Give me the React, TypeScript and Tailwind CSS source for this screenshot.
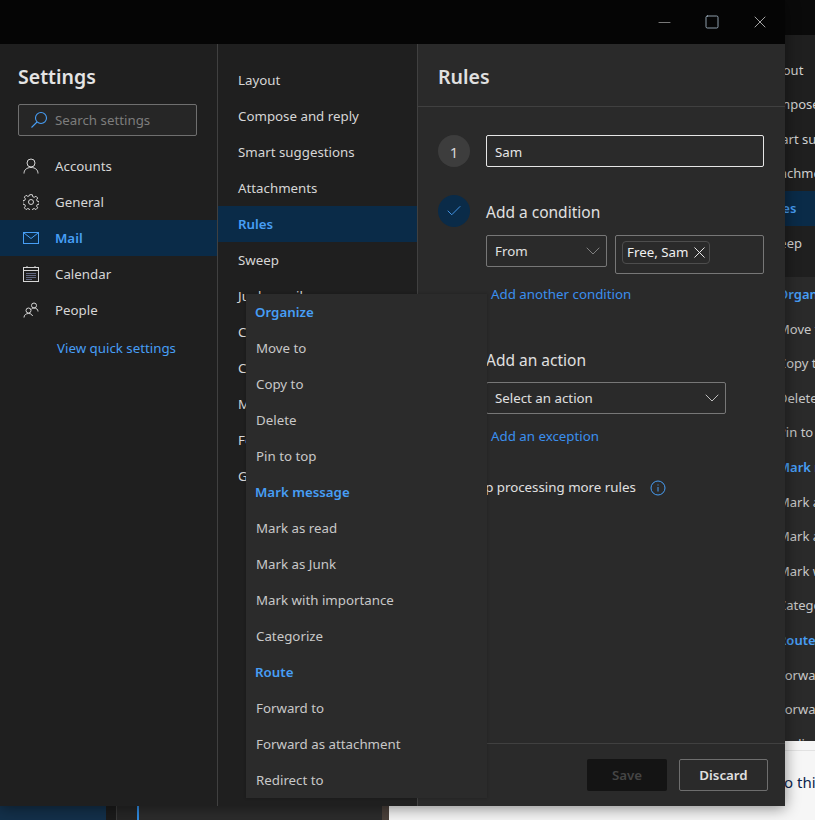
import type { ReactNode } from 'react';
import { Check, ChevronDown, Minus, Square, X } from 'lucide-react';

const MAIL_ITEMS = [
  'Layout',
  'Compose and reply',
  'Smart suggestions',
  'Attachments',
  'Rules',
  'Sweep',
  'Junk email',
  'Customize actions',
  'Categories',
  'Message handling',
  'Forwarding',
  'Groups',
];

const ACTION_MENU = [
  { label: 'Organize', header: true },
  { label: 'Move to' },
  { label: 'Copy to' },
  { label: 'Delete' },
  { label: 'Pin to top' },
  { label: 'Mark message', header: true },
  { label: 'Mark as read' },
  { label: 'Mark as Junk' },
  { label: 'Mark with importance' },
  { label: 'Categorize' },
  { label: 'Route', header: true },
  { label: 'Forward to' },
  { label: 'Forward as attachment' },
  { label: 'Redirect to' },
];

const FONT = "font-['Noto_Sans','Open_Sans',sans-serif]";

function Glyph({ children }: { children: ReactNode }) {
  return (
    <svg viewBox="0 0 16 16" className="w-4 h-4 shrink-0" fill="none" stroke="currentColor" strokeWidth="1">
      {children}
    </svg>
  );
}

function NavRow({ icon, label, active }: { icon: ReactNode; label: string; active?: boolean }) {
  return (
    <div
      className={
        active
          ? 'h-9 flex items-center gap-4 pl-[23px] bg-[#0a2b48] text-[#479ef5] font-semibold'
          : 'h-9 flex items-center gap-4 pl-[23px] text-[#d6d6d6]'
      }
    >
      {icon}
      <span className="pt-[2px]">{label}</span>
    </div>
  );
}

function BackWindow() {
  return (
    <>
      {/* other copy of the settings window, only its right edge shows */}
      <div className="absolute left-[700px] top-0 right-0 h-[35px] bg-[#0a0a0a]" />
      <div className={`absolute left-[700px] top-[35px] right-0 h-[706px] bg-[#1f1f1f] overflow-hidden text-[13px] whitespace-nowrap ${FONT}`}>
        <div className="pt-[18px]">
          {MAIL_ITEMS.slice(0, 6).map(item => (
            <div
              key={item}
              className={
                item === 'Rules'
                  ? 'h-[34.6px] flex items-center pl-[62px] bg-[#0a2b48] text-[#479ef5] font-semibold'
                  : 'h-[34.6px] flex items-center pl-[62px] text-[#d0d0d0]'
              }
            >
              {item}
            </div>
          ))}
        </div>
        <div className="mt-[16px] h-[480px] bg-[#2a2a2a]">
          {ACTION_MENU.map(item => (
            <div
              key={item.label}
              className={
                item.header
                  ? 'h-[34.6px] flex items-center pt-[2px] pl-[78px] text-[#479ef5] font-semibold'
                  : 'h-[34.6px] flex items-center pt-[2px] pl-[78px] text-[#c8c8c8]'
              }
            >
              {item.label}
            </div>
          ))}
        </div>
      </div>
      <div className={`absolute left-[700px] top-[741px] right-0 h-[79px] bg-[#f6f6f6] ${FONT}`}>
        <div className="mt-[9px] border-t border-[#e2e2e2] pt-[20px] pl-[84px] text-[15px] text-[#0b1f4d] whitespace-nowrap">
          o this
        </div>
      </div>
      <div className="absolute left-0 top-[790px] h-[30px] w-[700px] flex">
        <div className="w-[106px] bg-[#13304a]" />
        <div className="w-[11px] bg-[#1b1b1b] border-r border-[#3a3a3a]" />
        <div className="w-[20px] bg-[#262626]" />
        <div className="w-[2px] bg-[#2f8ae0]" />
        <div className="w-[243px] bg-[#2c2c2c]" />
        <div className="w-[7px] bg-[#4a403a]" />
        <div className="flex-1 bg-[#f4f4f4]" />
      </div>
    </>
  );
}

function SettingsColumn() {
  return (
    <div className="w-[218px] shrink-0 bg-[#1f1f1f] border-r border-[#404040]">
      <h1 className="pl-[18px] pt-[19px] h-[60px] text-[19.500px] leading-[28px] font-semibold text-[#e4e4e4]">Settings</h1>
      <div className="ml-[18px] w-[179px] h-8 flex items-center gap-[7px] pl-[11px] border border-[#6f6f6f] rounded-[2px] bg-[#262626] text-[#7d7d7d]">
        <svg viewBox="0 0 18 18" className="w-[18px] h-[18px] shrink-0 text-[#479ef5]" fill="none" stroke="currentColor" strokeWidth="1.1">
          <circle cx="11" cy="7" r="5.500" />
          <path d="M7 11 L1.500 16.500" />
        </svg>
        <span className="pt-[2px]">Search settings</span>
      </div>
      <div className="mt-3">
        <NavRow
          label="Accounts"
          icon={
            <Glyph>
              <circle cx="8" cy="5" r="4" />
              <path d="M1 15.500c0-3.500 2.500-6 7-6s7 2.500 7 6" />
            </Glyph>
          }
        />
        <NavRow
          label="General"
          icon={
            <Glyph>
              <circle cx="8" cy="8" r="2.500" />
              <path d="M6.700.7h2.600l.4 2 1.500.6 1.700-1.100 1.800 1.800-1.100 1.700.6 1.500 2 .4v2.600l-2 .4-.6 1.500 1.100 1.700-1.800 1.800-1.700-1.100-1.500.6-.4 2H6.700l-.4-2-1.500-.6-1.700 1.100-1.800-1.800 1.100-1.700-.6-1.500-2-.4V6.700l2-.4.6-1.500-1.100-1.700 1.800-1.800 1.700 1.100 1.500-.6z" />
            </Glyph>
          }
        />
        <NavRow
          active
          label="Mail"
          icon={
            <Glyph>
              <rect x="0.500" y="2.500" width="15" height="11" />
              <path d="M1 3l7 5.500L15 3" />
            </Glyph>
          }
        />
        <NavRow
          label="Calendar"
          icon={
            <Glyph>
              <rect x="0.500" y="1.500" width="15" height="14" />
              <path d="M1 4.500h14M4 0v2M12 0v2" />
              <path d="M3.500 7.500h9M3.500 9.500h9M3.500 11.500h9M3.500 13.500h6" strokeDasharray="1 1" stroke="#a8b4e8" />
            </Glyph>
          }
        />
        <NavRow
          label="People"
          icon={
            <Glyph>
              <circle cx="5.500" cy="8.500" r="2.500" />
              <circle cx="11" cy="3.500" r="2.500" />
              <path d="M1 15.500c0-2.500 2-4 4.500-4s3.500 1 4 2.500M8 7.500c.8-1 1.800-1.500 3-1.500 2.500 0 4 1.500 4 3.500" />
            </Glyph>
          }
        />
      </div>
      <div className="h-10 flex items-center pt-[2px] pl-[57px] text-[#479ef5] whitespace-nowrap">View quick settings</div>
    </div>
  );
}

function MailColumn() {
  return (
    <div className="w-[200px] shrink-0 bg-[#1f1f1f] border-r border-[#404040] pt-[18px]">
      {MAIL_ITEMS.map(item => (
        <div
          key={item}
          className={
            item === 'Rules'
              ? 'h-9 flex items-center pt-[2px] pl-5 bg-[#0a2b48] text-[#479ef5] font-semibold'
              : 'h-9 flex items-center pt-[2px] pl-5 text-[#d6d6d6]'
          }
        >
          {item}
        </div>
      ))}
    </div>
  );
}

function RulesColumn() {
  return (
    <div className="flex-1 min-w-0 flex flex-col bg-[#2a2a2a] text-[#e0e0e0]">
      <h2 className="h-[63px] shrink-0 pl-5 pt-[19px] text-[19.500px] leading-[28px] font-semibold border-b border-[#404040]">Rules</h2>

      <div className="flex-1 pl-5 pt-[28px]">
        <div className="flex gap-4">
          <div className="w-8 h-8 rounded-full bg-[#3d3d3d] flex items-center justify-center pt-[2px] text-[15px] text-[#d6d6d6]">1</div>
          <div className="w-[278px] h-8 flex items-center pt-[3px] px-2 border border-[#e6e6e6] rounded-[2px] text-[#e6e6e6]">Sam</div>
        </div>

        <div className="mt-7 flex gap-4 items-center">
          <div className="w-8 h-8 rounded-full bg-[#0a2b48] flex items-center justify-center text-[#479ef5]">
            <Check size={18} strokeWidth={1.2} />
          </div>
          <div className="text-[15.500px] text-[#e0e0e0] mt-[4px]">Add a condition</div>
        </div>

        <div className="ml-12 mt-2 flex gap-2 items-start">
          <div className="w-[121px] h-8 flex items-center justify-between pl-2 pr-[1px] border border-[#777] rounded-[2px]">
            <span className="pt-[2px]">From</span>
            <ChevronDown size={24} strokeWidth={0.9} className="text-[#8a8a8a]" />
          </div>
          <div className="w-[149px] h-[39px] pl-[6px] pt-[5px] border border-[#777] rounded-[2px]">
            <div className="w-[88px] h-[23px] flex items-center pl-1 gap-[2px] border border-[#4d4d4d] rounded-[4px] text-[#f0f0f0] whitespace-nowrap">
              <span className="pt-[1px]">Free, Sam</span>
              <X size={19} strokeWidth={1.2} className="shrink-0" />
            </div>
          </div>
        </div>
        <div className="ml-[53px] mt-[10px] h-5 flex items-center pt-[2px] text-[#3b8fee]">Add another condition</div>

        <div className="ml-12 mt-[44px] h-6 flex items-center pt-[2px] text-[15.500px]">Add an action</div>
        <div className="ml-12 mt-[10px] w-[240px] h-8 flex items-center justify-between pl-2 pr-[1px] border border-[#777] rounded-[2px]">
          <span className="pt-[2px]">Select an action</span>
          <ChevronDown size={24} strokeWidth={0.9} className="text-[#cfcfcf]" />
        </div>
        <div className="ml-[53px] mt-3 h-5 flex items-center pt-[2px] text-[#3b8fee]">Add an exception</div>

        <div className="ml-[27px] mt-[32px] h-5 flex items-center gap-[14px] whitespace-nowrap">
          <span>Stop processing more rules</span>
          <svg viewBox="0 0 16 16" className="w-4 h-4 text-[#479ef5]" fill="none" stroke="currentColor" strokeWidth="1">
            <circle cx="8" cy="8" r="7" />
            <path d="M8 7v4.500M8 4.500v1" />
          </svg>
        </div>
      </div>

      <div className="h-[63px] shrink-0 border-t border-[#404040] flex justify-end gap-3 pt-[15px] pr-[17px]">
        <div className="w-[80px] h-8 flex items-center justify-center pt-[2px] bg-[#141414] rounded-[2px] text-[#454545] font-semibold">Save</div>
        <div className="w-[89px] h-8 flex items-center justify-center pt-[2px] border border-[#6e6e6e] rounded-[2px] text-[#e0e0e0] font-semibold">Discard</div>
      </div>
    </div>
  );
}

function ActionMenu() {
  return (
    <div className="absolute left-[246px] top-[250px] w-[241px] bg-[#2b2b2b] shadow-[0_0_3px_rgba(0,0,0,0.25)] whitespace-nowrap">
      {ACTION_MENU.map(item => (
        <div
          key={item.label}
          className={
            item.header
              ? 'h-9 flex items-center pt-[2px] pl-[9px] text-[#479ef5] font-semibold'
              : 'h-9 flex items-center pt-[2px] pl-[10px] text-[#c8c8c8]'
          }
        >
          {item.label}
        </div>
      ))}
    </div>
  );
}

export default function App() {
  return (
    <div className={`relative w-[815px] h-[820px] overflow-hidden bg-[#1f1f1f] text-[13.300px] ${FONT}`}>
      <BackWindow />

      {/* front settings window */}
      <div className="absolute left-0 top-0 w-[785px] h-[806px] flex flex-col shadow-[0_2px_14px_rgba(0,0,0,0.45)]">
        <div className="h-11 shrink-0 bg-[#050505] flex justify-end items-center text-[#c4c4c4]">
          <div className="w-12 flex justify-center"><Minus size={19} strokeWidth={1.1} className="text-[#8a8a8a]" /></div>
          <div className="w-12 flex justify-center"><Square size={16} strokeWidth={1.2} className="text-[#b0c4d4]" /></div>
          <div className="w-12 mr-[1px] flex justify-center"><X size={20} strokeWidth={1} /></div>
        </div>
        <div className="relative flex-1 min-h-0 flex">
          <SettingsColumn />
          <MailColumn />
          <RulesColumn />
          <ActionMenu />
        </div>
      </div>
    </div>
  );
}
